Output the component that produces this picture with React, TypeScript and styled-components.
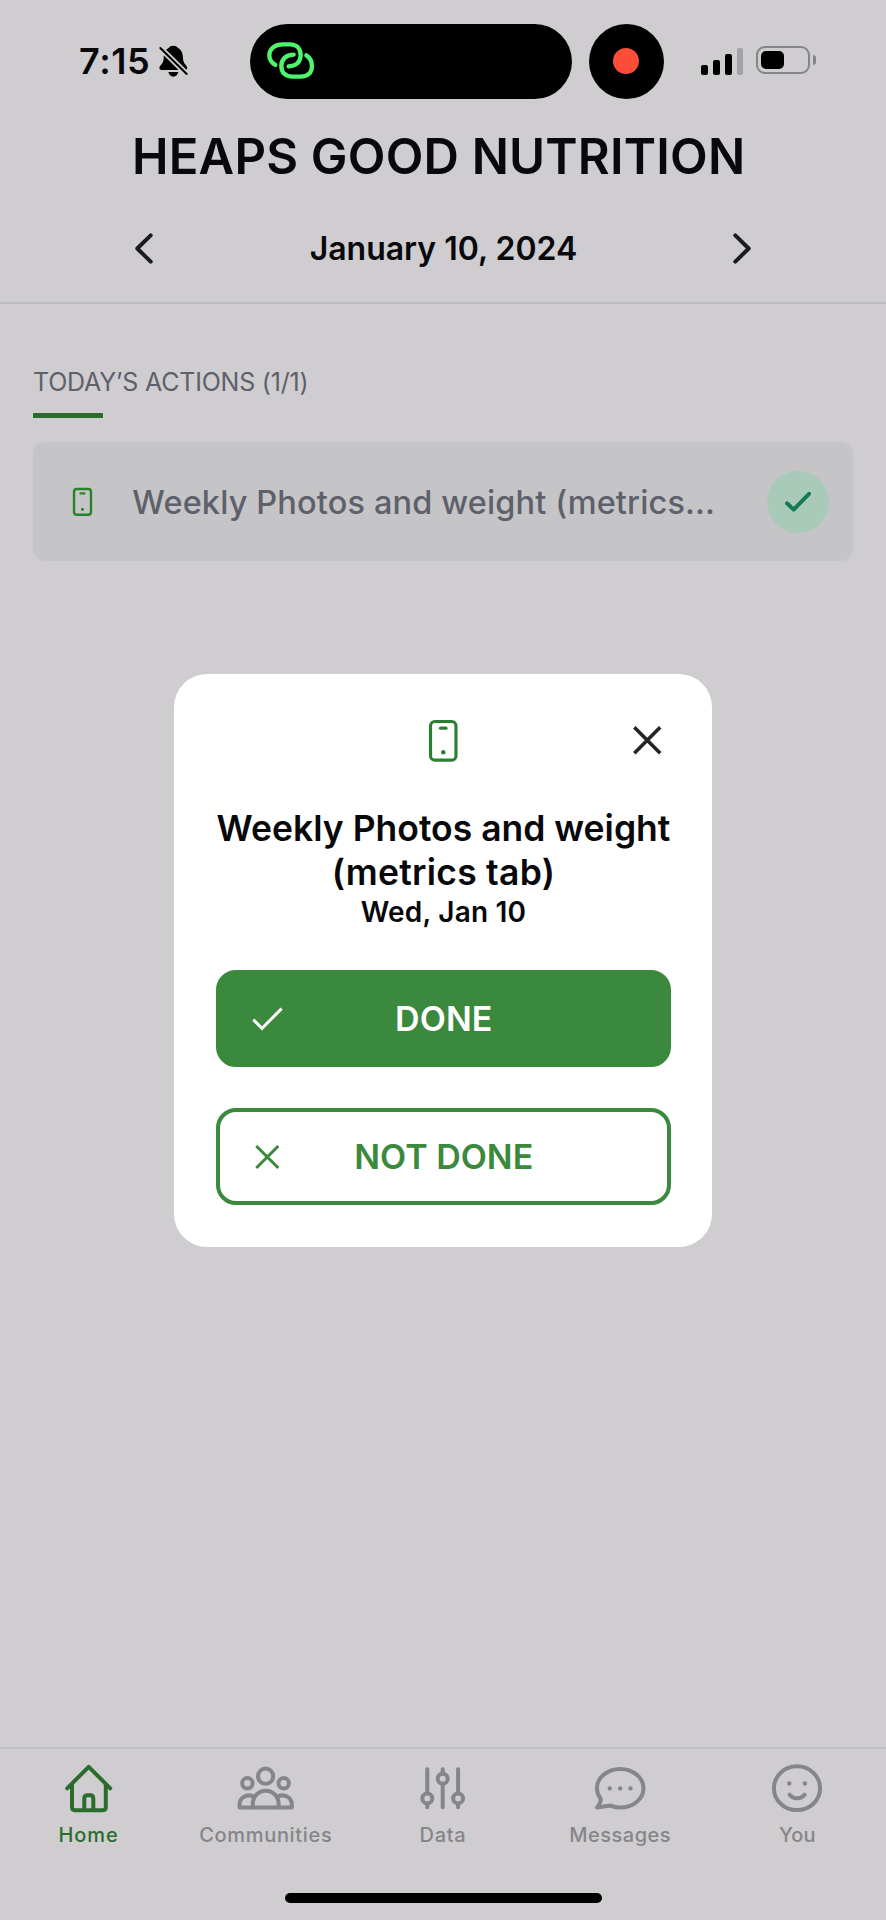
import React from "react";
import styled, { createGlobalStyle } from "styled-components";

const colors = {
  page: "#cfcdd0",
  ink: "#09090b",
  muted: "#5e606a",
  green: "#3a893c",
  greenDim: "#2b6c2d",
  nav: "#868588",
  line: "#bcbdbf",
};

const GlobalStyle = createGlobalStyle`
  * { box-sizing: border-box; }
  body { margin: 0; background: ${colors.page}; }
  button { font: inherit; color: inherit; background: none; border: 0; padding: 0; }
  svg { display: block; flex: none; overflow: visible; }
`;

const Screen = styled.div`
  position: relative;
  display: flex;
  flex-direction: column;
  width: 886px;
  height: 1920px;
  background: ${colors.page};
  color: ${colors.ink};
  font-family: "Inter", "Liberation Sans", sans-serif;
`;

const Text = styled.span<{ $size: number; $weight?: number; $track?: number; $line?: number }>`
  display: block;
  font-size: ${(p) => p.$size}px;
  font-weight: ${(p) => p.$weight ?? 400};
  letter-spacing: ${(p) => p.$track ?? 0}px;
  line-height: ${(p) => p.$line ?? p.$size}px;
  white-space: nowrap;
`;

const StatusBar = styled.div`
  display: flex;
  align-items: center;
  height: 75px;
  margin-top: 23.5px;
  padding-left: 79px;

  > * { flex: none; }
`;

const Clock = styled.div`
  display: flex;
  align-items: center;
  gap: 9px;
  width: 171.3px;
`;

const Island = styled.div`
  display: flex;
  align-items: center;
  width: 322px;
  height: 75px;
  padding-left: 14px;
  border-radius: 38px;
  background: #000;
`;

const RecordPill = styled.div`
  display: grid;
  place-items: center;
  width: 75px;
  height: 75px;
  margin-left: 16.7px;
  border-radius: 50%;
  background: #000;
`;

const RecordDot = styled.div`
  width: 26px;
  height: 26px;
  border-radius: 50%;
  background: #fb4d38;
`;

const Signal = styled.div`
  display: flex;
  align-items: flex-end;
  gap: 5.2px;
  height: 27px;
  margin-left: 37.5px;
`;

const SignalBar = styled.div<{ $height: number; $off?: boolean }>`
  width: 6.6px;
  height: ${(p) => p.$height}px;
  border-radius: 2px;
  background: ${(p) => (p.$off ? "#a3a2a5" : "#000")};
`;

const Battery = styled.div`
  display: flex;
  align-items: center;
  gap: 2.5px;
  margin: -2px 0 0 12.5px;
`;

const BatteryShell = styled.div`
  width: 54.5px;
  height: 27.5px;
  padding: 2.6px;
  border: 2px solid #858487;
  border-radius: 9px;
`;

const BatteryLevel = styled.div`
  width: 23.5px;
  height: 18.5px;
  border-radius: 5px;
  background: #000;
`;

const BatteryTip = styled.div`
  width: 3.5px;
  height: 10px;
  border-radius: 0 4px 4px 0;
  background: #858487;
`;

const Header = styled.header`
  display: flex;
  flex-direction: column;
  height: 205.5px;
  padding: 33.5px 135px 0;
  border-bottom: 2px solid ${colors.line};
`;

const Title = styled.h1`
  margin: 0 0 0 -3px;
`;

const DateRow = styled.div`
  display: flex;
  align-items: center;
  justify-content: space-between;
  height: 32px;
  margin-top: 51.7px;
`;

const DateLabel = styled.div`
  padding: 1px 0 0 1px;
`;

const Actions = styled.main`
  flex: 1;
  padding: 65.5px 33px 0;
  color: ${colors.muted};
`;

const Accent = styled.div`
  width: 70px;
  height: 4.6px;
  margin-top: 18.5px;
  background: ${colors.greenDim};
`;

const ActionCard = styled.div`
  display: flex;
  align-items: center;
  height: 119.5px;
  margin-top: 24px;
  padding: 1px 24.5px 0 40px;
  border-radius: 12px;
  background: #c5c5c7;
`;

const ActionName = styled.div`
  flex: 1;
  margin-left: 40.3px;
  padding-top: 3px;
`;

const DoneBadge = styled.div`
  display: grid;
  place-items: center;
  width: 62px;
  height: 62px;
  border-radius: 50%;
  background: #a9cab9;
`;

const TabBar = styled.nav`
  display: grid;
  grid-template-columns: repeat(5, 1fr);
  height: 146px;
  padding-top: 11px;
  border-top: 2px solid #bfc1c3;
`;

const Tab = styled.button<{ $active?: boolean }>`
  display: flex;
  flex-direction: column;
  align-items: center;
  gap: 8.5px;
  color: ${(p) => (p.$active ? colors.greenDim : colors.nav)};
`;

const HomeIndicator = styled.div`
  width: 317px;
  height: 10px;
  margin: 0 auto 16.5px;
  border-radius: 5px;
  background: #000;
`;

const Footer = styled.footer`
  display: flex;
  flex-direction: column;
  height: 173px;
`;

const Overlay = styled.div`
  position: absolute;
  inset: 0;
  display: grid;
  place-items: center;
`;

const Dialog = styled.section`
  display: flex;
  flex-direction: column;
  width: 538px;
  height: 573px;
  padding: 46px 41.5px 0;
  border-radius: 33px;
  background: #fff;
`;

const DialogTop = styled.div`
  display: grid;
  grid-template-columns: 1fr auto 1fr;
  align-items: center;
  height: 41px;
  margin-bottom: 46.5px;
`;

const CloseButton = styled.button`
  grid-column: 3;
  justify-self: end;
  margin-right: 9.5px;
  color: #242427;
`;

const PhoneSlot = styled.div`
  grid-column: 2;
`;

const DialogText = styled.div`
  height: 121.5px;
  padding-left: 1px;
  text-align: center;
`;

const Choice = styled.button<{ $filled?: boolean }>`
  display: grid;
  grid-template-columns: 1fr auto 1fr;
  align-items: center;
  height: 96.5px;
  margin-top: 41.5px;
  padding: 1px 31px 0 32.5px;
  border: 4px solid ${colors.green};
  border-radius: 20px;
  background: ${(p) => (p.$filled ? colors.green : "#fff")};
  color: ${(p) => (p.$filled ? "#fff" : colors.green)};
`;

const PhoneIcon = ({ width, color, stroke }: { width: number; color: string; stroke: number }) => (
  <svg width={width} height={(width * 41) / 28} viewBox="0 0 28 41" fill="none" stroke={color} strokeWidth={stroke} strokeLinecap="round">
    <rect x="1.5" y="1.5" width="25" height="38" rx="4.2" />
    <path d="M11.3 8h5.4" />
    <circle cx="14" cy="31.8" r="2.2" fill={color} stroke="none" />
  </svg>
);

const BellOffIcon = () => (
  <svg width="29" height="32" viewBox="298 103 87 96">
    <path d="M341 105C350 105 353 108 355 112C366 118 370 130 370 143C370 160 383 165 383 172Q383 178 376 178H306Q299 178 299 172C299 165 312 160 312 143C312 130 316 118 327 112C329 108 332 105 341 105Z" />
    <path d="M326 184H356Q352 198 341 198Q330 198 326 184Z" />
    <path d="M302 112L381 190" stroke={colors.page} strokeWidth="17" />
    <path d="M302 112L381 190" stroke="#000" strokeWidth="6" strokeLinecap="round" />
  </svg>
);

const LinkIcon = () => (
  <svg width="53.3" height="43.3" viewBox="612 89 160 130" fill="none" stroke="#4df56c" strokeWidth="13" strokeLinecap="round">
    <path d="M646 167C634 160 628 150 628 138C628 118 645 105 668 105H690C710 105 722 118 722 137C722 157 710 170 686 171" />
    <path d="M701 136C678 136 664 150 664 170C664 190 676 202 698 202H722C744 202 756 190 756 170C756 156 750 145 739 138" />
  </svg>
);

const Chevron = ({ right }: { right?: boolean }) => (
  <svg width="18" height="31" viewBox="0 0 18 31" fill="none" stroke="#1c1c1f" strokeWidth="4" strokeLinecap="round" strokeLinejoin="round">
    <path d={right ? "M2.3 2.3L15.7 15.5L2.3 28.7" : "M15.7 2.3L2.3 15.5L15.7 28.7"} />
  </svg>
);

const CrossIcon = ({ size, stroke }: { size: number; stroke: number }) => (
  <svg width={size} height={size} viewBox={`0 0 ${size} ${size}`} fill="none" stroke="currentColor" strokeWidth={stroke}>
    <path d={`M1.3 1.3L${size - 1.3} ${size - 1.3}M${size - 1.3} 1.3L1.3 ${size - 1.3}`} />
  </svg>
);

const TabIcon = ({ children }: { children: React.ReactNode }) => (
  <svg width="60" height="56" viewBox="0 0 60 56" fill="none" stroke="currentColor" strokeWidth="4" strokeLinecap="round" strokeLinejoin="round">
    {children}
  </svg>
);

const tabs = [
  {
    label: "Home",
    track: 0.9,
    icon: (
      <>
        <path d="M8.2 28.3L29.7 6.8L51.2 28.3" />
        <path d="M13 24.5V47.3Q13 50.2 15.9 50.2H43.9Q46.8 50.2 46.8 47.3V24.5" />
        <path d="M25.3 50V38.5Q25.3 35.3 28.5 35.3H31.1Q34.3 35.3 34.3 38.5V50" />
      </>
    ),
  },
  {
    label: "Communities",
    track: 0.68,
    icon: (
      <>
        <circle cx="29.6" cy="16.2" r="7.6" />
        <circle cx="11.4" cy="23.3" r="5.2" />
        <circle cx="47.7" cy="23.3" r="5.2" />
        <path d="M16.8 47.5V43.7A12.9 13 0 0 1 42.6 43.7V47.5" />
        <path d="M17.2 36.4C10.9 33.5 3.6 37.5 3.6 44.5V47.4H55.8V44.5C55.8 37.5 48.5 33.5 42.2 36.4" />
      </>
    ),
  },
  {
    label: "Data",
    track: 0.7,
    icon: (
      <>
        <path d="M14.3 9.3V33.3M14.3 43.5V47.3M29.7 9.3V13.6M29.7 23.8V47.3M45.1 9.3V33.3M45.1 43.5V47.3" />
        <circle cx="14.3" cy="38.4" r="5" />
        <circle cx="29.7" cy="18.7" r="5" />
        <circle cx="45.1" cy="38.4" r="5" />
      </>
    ),
  },
  {
    label: "Messages",
    track: 0.5,
    icon: (
      <>
        <path d="M10.7 39C8.2 35.6 6.9 32 6.9 28.3C6.9 17.5 17.3 9 30.2 9S53.5 17.5 53.5 28.3S43 47.6 30.2 47.6C27 47.6 23.3 46.8 20.7 45.6L7 47.5C9 45 11 42.5 10.7 39Z" />
        <g fill="currentColor" stroke="none">
          <circle cx="19.8" cy="28.4" r="2.2" />
          <circle cx="30.2" cy="28.4" r="2.2" />
          <circle cx="40.5" cy="28.4" r="2.2" />
        </g>
      </>
    ),
  },
  {
    label: "You",
    track: 0.2,
    icon: (
      <>
        <ellipse cx="30" cy="28.2" rx="23.1" ry="21.9" />
        <path d="M22.6 34.7C26.3 39.3 33.9 39.3 37.6 34.7" />
        <g fill="currentColor" stroke="none">
          <circle cx="22.3" cy="23.4" r="2.2" />
          <circle cx="37.9" cy="23.4" r="2.2" />
        </g>
      </>
    ),
  },
];

export default function App() {
  return (
    <Screen>
      <GlobalStyle />
      <StatusBar>
        <Clock>
          <Text $size={36} $weight={600} $track={0.6}>7:15</Text>
          <BellOffIcon />
        </Clock>
        <Island>
          <LinkIcon />
        </Island>
        <RecordPill>
          <RecordDot />
        </RecordPill>
        <Signal>
          <SignalBar $height={10} />
          <SignalBar $height={15} />
          <SignalBar $height={20.5} />
          <SignalBar $height={26.5} $off />
        </Signal>
        <Battery>
          <BatteryShell>
            <BatteryLevel />
          </BatteryShell>
          <BatteryTip />
        </Battery>
      </StatusBar>

      <Header>
        <Title>
          <Text $size={49} $weight={600} $track={0.2}>HEAPS GOOD NUTRITION</Text>
        </Title>
        <DateRow>
          <Chevron />
          <DateLabel>
            <Text $size={32} $weight={600}>January 10, 2024</Text>
          </DateLabel>
          <Chevron right />
        </DateRow>
      </Header>

      <Actions>
        <Text $size={25} $track={-0.21}>TODAY’S ACTIONS (1/1)</Text>
        <Accent />
        <ActionCard>
          <PhoneIcon width={19} color="#26832b" stroke={3.5} />
          <ActionName>
            <Text $size={32.5} $weight={500} $track={0.14}>Weekly Photos and weight (metrics...</Text>
          </ActionName>
          <DoneBadge>
            <svg width="28" height="22" viewBox="0 0 28 22" fill="none" stroke="#137a56" strokeWidth="4" strokeLinecap="round" strokeLinejoin="round">
              <path d="M3 12.3L9.7 18.6L25 2.8" />
            </svg>
          </DoneBadge>
        </ActionCard>
      </Actions>

      <Footer>
        <TabBar>
          {tabs.map((tab, i) => (
            <Tab key={tab.label} $active={i === 0}>
              <TabIcon>{tab.icon}</TabIcon>
              <Text $size={20} $weight={500} $track={tab.track}>{tab.label}</Text>
            </Tab>
          ))}
        </TabBar>
        <HomeIndicator />
      </Footer>

      <Overlay>
        <Dialog>
          <DialogTop>
            <PhoneSlot>
              <PhoneIcon width={28.5} color="#2a8030" stroke={3.1} />
            </PhoneSlot>
            <CloseButton aria-label="Close">
              <CrossIcon size={28.5} stroke={3.6} />
            </CloseButton>
          </DialogTop>
          <DialogText>
            <Text $size={35.5} $weight={600} $line={44}>Weekly Photos and weight</Text>
            <Text $size={35.5} $weight={600} $track={0.25} $line={44}>(metrics tab)</Text>
            <Text $size={28} $weight={600} $track={0.2} $line={34}>Wed, Jan 10</Text>
          </DialogText>
          <Choice $filled>
            <svg width="31" height="24" viewBox="0 0 31 24" fill="none" stroke="currentColor" strokeWidth="3">
              <path d="M1.3 12.6L10 21.3L29.6 1.6" />
            </svg>
            <Text $size={34} $weight={600} $track={0.1}>DONE</Text>
          </Choice>
          <Choice>
            <svg width="31" height="24" viewBox="0 0 31 24" fill="none" stroke="currentColor" strokeWidth="3">
              <path d="M4.3 1L26.3 23M26.3 1L4.3 23" />
            </svg>
            <Text $size={34} $weight={600}>NOT DONE</Text>
          </Choice>
        </Dialog>
      </Overlay>
    </Screen>
  );
}
